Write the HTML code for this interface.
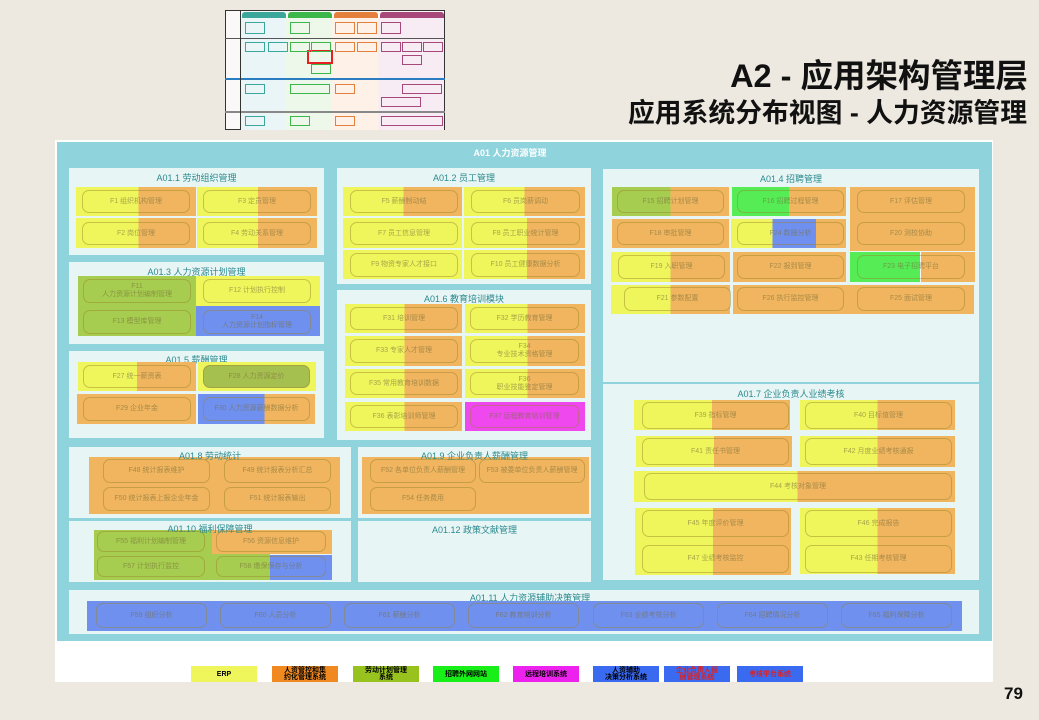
<!DOCTYPE html><html><head><meta charset="utf-8"><style>
*{margin:0;padding:0;box-sizing:border-box}
body{width:1039px;height:720px;background:#ede9e0;position:relative;overflow:hidden;font-family:"Liberation Sans","Noto Sans CJK SC",sans-serif}
.a{position:absolute}
.p{position:absolute;background:#e7f5f4}
.t{position:absolute;font-size:9px;color:#2c8a90;text-align:center;white-space:nowrap}
.c{position:absolute}
.b{position:absolute;border:1px solid rgba(150,130,40,.45);border-radius:7px;font-size:7px;color:rgba(120,110,60,.6);display:flex;align-items:center;justify-content:center;text-align:center;line-height:8px}
.Y{background:#eef65c}.O{background:#f0b55e}.G{background:#a6cd4f}.N{background:#55ec55}.B{background:#6f90ef}.M{background:#ee48ee}
.lg{position:absolute;top:666px;height:16px;width:66px;font-size:7px;font-weight:bold;display:flex;align-items:center;justify-content:center;text-align:center;line-height:7px}
.tb{position:absolute;background:#fff}
</style></head><body>

<!-- thumbnail -->
<div class="a" style="left:225px;top:10px;width:220px;height:120px;background:#fbf8f8;border:1px solid #333"></div>
<div class="a" style="left:242px;top:12px;width:44px;height:6px;background:#3aa79a;border-radius:3px 3px 0 0"></div>
<div class="a" style="left:288px;top:12px;width:44px;height:6px;background:#3cb84a;border-radius:3px 3px 0 0"></div>
<div class="a" style="left:334px;top:12px;width:44px;height:6px;background:#e57f3c;border-radius:3px 3px 0 0"></div>
<div class="a" style="left:380px;top:12px;width:64px;height:6px;background:#a8487a;border-radius:3px 3px 0 0"></div>
<div class="a" style="left:240px;top:18px;width:204px;height:112px;background:linear-gradient(90deg,#e9f5f7 0 22%,#eef8ea 22% 45%,#fdf1e8 45% 68%,#f8ecf4 68%)"></div>
<div class="a" style="left:225px;top:38px;width:220px;height:1px;background:#555"></div>
<div class="a" style="left:225px;top:78px;width:220px;height:2px;background:#2a7dc0"></div>
<div class="a" style="left:225px;top:111px;width:220px;height:2px;background:#888"></div>
<div class="a" style="left:240px;top:10px;width:1px;height:120px;background:#333"></div>
<div class="a" style="left:307px;top:50px;width:26px;height:14px;border:2px solid #e52020"></div>
<div class="a" style="left:245px;top:22px;width:20px;height:12px;border:1px solid #3aa79a"></div>
<div class="a" style="left:245px;top:42px;width:20px;height:10px;border:1px solid #3aa79a"></div>
<div class="a" style="left:268px;top:42px;width:20px;height:10px;border:1px solid #3aa79a"></div>
<div class="a" style="left:290px;top:22px;width:20px;height:12px;border:1px solid #3cb84a"></div>
<div class="a" style="left:290px;top:42px;width:20px;height:10px;border:1px solid #3cb84a"></div>
<div class="a" style="left:311px;top:42px;width:20px;height:10px;border:1px solid #3cb84a"></div>
<div class="a" style="left:311px;top:64px;width:20px;height:10px;border:1px solid #3cb84a"></div>
<div class="a" style="left:335px;top:22px;width:20px;height:12px;border:1px solid #e57f3c"></div>
<div class="a" style="left:357px;top:22px;width:20px;height:12px;border:1px solid #e57f3c"></div>
<div class="a" style="left:335px;top:42px;width:20px;height:10px;border:1px solid #e57f3c"></div>
<div class="a" style="left:357px;top:42px;width:20px;height:10px;border:1px solid #e57f3c"></div>
<div class="a" style="left:381px;top:22px;width:20px;height:12px;border:1px solid #a8487a"></div>
<div class="a" style="left:381px;top:42px;width:20px;height:10px;border:1px solid #a8487a"></div>
<div class="a" style="left:402px;top:42px;width:20px;height:10px;border:1px solid #a8487a"></div>
<div class="a" style="left:423px;top:42px;width:20px;height:10px;border:1px solid #a8487a"></div>
<div class="a" style="left:402px;top:55px;width:20px;height:10px;border:1px solid #a8487a"></div>
<div class="a" style="left:245px;top:84px;width:20px;height:10px;border:1px solid #3aa79a"></div>
<div class="a" style="left:290px;top:84px;width:40px;height:10px;border:1px solid #3cb84a"></div>
<div class="a" style="left:335px;top:84px;width:20px;height:10px;border:1px solid #e57f3c"></div>
<div class="a" style="left:402px;top:84px;width:40px;height:10px;border:1px solid #a8487a"></div>
<div class="a" style="left:381px;top:97px;width:40px;height:10px;border:1px solid #a8487a"></div>
<div class="a" style="left:245px;top:116px;width:20px;height:10px;border:1px solid #3aa79a"></div>
<div class="a" style="left:290px;top:116px;width:20px;height:10px;border:1px solid #3cb84a"></div>
<div class="a" style="left:335px;top:116px;width:20px;height:10px;border:1px solid #e57f3c"></div>
<div class="a" style="left:381px;top:116px;width:62px;height:10px;border:1px solid #a8487a"></div>

<!-- titles -->
<div class="a" style="right:11px;top:50px;font-size:32.5px;font-weight:bold;color:#111;white-space:nowrap">A2 - 应用架构管理层</div>
<div class="a" style="right:12px;top:91px;font-size:26.8px;font-weight:bold;color:#111;white-space:nowrap">应用系统分布视图 - 人力资源管理</div>
<div class="a" style="left:1004px;top:684px;font-size:17px;font-weight:bold;color:#111">79</div>

<!-- white panel -->
<div class="a" style="left:55px;top:140px;width:938px;height:542px;background:#fff"></div>
<div class="a" style="left:57px;top:142px;width:935px;height:499px;background:#8fd4dc"></div>
<div class="t" style="left:440px;top:146px;width:140px;color:#fff;font-weight:bold">A01 人力资源管理</div>

<!-- A01.1 -->
<div class="p" style="left:69px;top:168px;width:255px;height:87px"></div>
<div class="t" style="left:69px;top:171px;width:255px">A01.1 劳动组织管理</div>
<div class="c" style="left:76px;top:187px;width:120px;height:29px;background:linear-gradient(90deg,#eef65c 0 52%,#f0b55e 52%)"></div>
<div class="c" style="left:197px;top:187px;width:120px;height:29px;background:linear-gradient(90deg,#eef65c 0 51%,#f0b55e 51%)"></div>
<div class="c" style="left:76px;top:218px;width:120px;height:30px;background:linear-gradient(90deg,#eef65c 0 52%,#f0b55e 52%)"></div>
<div class="c" style="left:197px;top:218px;width:120px;height:30px;background:linear-gradient(90deg,#eef65c 0 51%,#f0b55e 51%)"></div>
<div class="b" style="left:82px;top:190px;width:108px;height:23px">F1 组织机构管理</div>
<div class="b" style="left:203px;top:190px;width:108px;height:23px">F3 定员管理</div>
<div class="b" style="left:82px;top:222px;width:108px;height:23px">F2 岗位管理</div>
<div class="b" style="left:203px;top:222px;width:108px;height:23px">F4 劳动关系管理</div>

<!-- A01.3 -->
<div class="p" style="left:69px;top:262px;width:255px;height:82px"></div>
<div class="t" style="left:69px;top:265px;width:255px">A01.3 人力资源计划管理</div>
<div class="c G" style="left:78px;top:276px;width:118px;height:60px"></div>
<div class="c Y" style="left:196px;top:276px;width:124px;height:30px"></div>
<div class="c B" style="left:196px;top:306px;width:124px;height:30px"></div>
<div class="b" style="left:83px;top:279px;width:108px;height:24px">F11<br>人力资源计划编制管理</div>
<div class="b" style="left:203px;top:279px;width:108px;height:24px">F12 计划执行控制</div>
<div class="b" style="left:83px;top:310px;width:108px;height:24px">F13 模型库管理</div>
<div class="b" style="left:203px;top:310px;width:108px;height:24px">F14<br>人力资源计划指标管理</div>

<!-- A01.5 -->
<div class="p" style="left:69px;top:351px;width:255px;height:87px"></div>
<div class="t" style="left:69px;top:353px;width:255px">A01.5 薪酬管理</div>
<div class="c" style="left:78px;top:362px;width:118px;height:29px;background:linear-gradient(90deg,#eef65c 0 50%,#f0b55e 50%)"></div>
<div class="c Y" style="left:198px;top:362px;width:118px;height:29px"></div>
<div class="c O" style="left:77px;top:394px;width:119px;height:30px"></div>
<div class="c" style="left:198px;top:394px;width:117px;height:30px;background:linear-gradient(90deg,#6f90ef 0 57%,#f0b55e 57%)"></div>
<div class="b" style="left:83px;top:365px;width:108px;height:23px">F27 统一薪资表</div>
<div class="b" style="left:203px;top:365px;width:107px;height:23px;background:#a6c050">F28 人力资源定价</div>
<div class="b" style="left:83px;top:397px;width:108px;height:24px">F29 企业年金</div>
<div class="b" style="left:203px;top:397px;width:107px;height:24px">F30 人力资源薪酬数据分析</div>

<!-- A01.2 -->
<div class="p" style="left:337px;top:168px;width:254px;height:116px"></div>
<div class="t" style="left:337px;top:171px;width:254px">A01.2 员工管理</div>
<div class="c" style="left:343px;top:187px;width:119px;height:29px;background:linear-gradient(90deg,#eef65c 0 51%,#f0b55e 51%)"></div>
<div class="c" style="left:464px;top:187px;width:121px;height:29px;background:linear-gradient(90deg,#eef65c 0 50%,#f0b55e 50%)"></div>
<div class="c Y" style="left:343px;top:218px;width:119px;height:30px"></div>
<div class="c" style="left:464px;top:218px;width:121px;height:30px;background:linear-gradient(90deg,#eef65c 0 52%,#f0b55e 52%)"></div>
<div class="c Y" style="left:343px;top:250px;width:119px;height:29px"></div>
<div class="c" style="left:464px;top:250px;width:121px;height:29px;background:linear-gradient(90deg,#eef65c 0 52%,#f0b55e 52%)"></div>
<div class="b" style="left:350px;top:190px;width:108px;height:23px">F5 薪酬制动结</div>
<div class="b" style="left:471px;top:190px;width:109px;height:23px">F6 员岗薪调动</div>
<div class="b" style="left:350px;top:222px;width:108px;height:23px">F7 员工信息管理</div>
<div class="b" style="left:471px;top:222px;width:109px;height:23px">F8 员工职业统计管理</div>
<div class="b" style="left:350px;top:253px;width:108px;height:24px">F9 物资专家人才接口</div>
<div class="b" style="left:471px;top:253px;width:109px;height:24px">F10 员工健康数据分析</div>

<!-- A01.6 -->
<div class="p" style="left:337px;top:290px;width:254px;height:150px"></div>
<div class="t" style="left:337px;top:292px;width:254px">A01.6 教育培训模块</div>
<div class="c" style="left:345px;top:304px;width:117px;height:29px;background:linear-gradient(90deg,#eef65c 0 51%,#f0b55e 51%)"></div>
<div class="c" style="left:465px;top:304px;width:120px;height:29px;background:linear-gradient(90deg,#eef65c 0 52%,#f0b55e 52%)"></div>
<div class="c" style="left:345px;top:336px;width:117px;height:30px;background:linear-gradient(90deg,#eef65c 0 51%,#f0b55e 51%)"></div>
<div class="c" style="left:465px;top:336px;width:120px;height:30px;background:linear-gradient(90deg,#eef65c 0 52%,#f0b55e 52%)"></div>
<div class="c" style="left:345px;top:369px;width:117px;height:29px;background:linear-gradient(90deg,#eef65c 0 51%,#f0b55e 51%)"></div>
<div class="c" style="left:465px;top:369px;width:120px;height:29px;background:linear-gradient(90deg,#eef65c 0 52%,#f0b55e 52%)"></div>
<div class="c" style="left:345px;top:402px;width:117px;height:29px;background:linear-gradient(90deg,#eef65c 0 51%,#f0b55e 51%)"></div>
<div class="c M" style="left:465px;top:402px;width:120px;height:29px"></div>
<div class="b" style="left:350px;top:307px;width:108px;height:23px">F31 培训管理</div>
<div class="b" style="left:470px;top:307px;width:109px;height:23px">F32 学历教育管理</div>
<div class="b" style="left:350px;top:339px;width:108px;height:24px">F33 专家人才管理</div>
<div class="b" style="left:470px;top:339px;width:109px;height:24px">F34<br>专业技术资格管理</div>
<div class="b" style="left:350px;top:372px;width:108px;height:23px">F35 常用教育培训数据</div>
<div class="b" style="left:470px;top:372px;width:109px;height:23px">F36<br>职业技能鉴定管理</div>
<div class="b" style="left:350px;top:405px;width:108px;height:23px">F36 表彰培训师管理</div>
<div class="b" style="left:470px;top:405px;width:109px;height:23px">F37 远程教育培训管理</div>

<!-- A01.4 -->
<div class="p" style="left:603px;top:169px;width:376px;height:213px"></div>
<div class="t" style="left:603px;top:172px;width:376px">A01.4 招聘管理</div>
<div class="c" style="left:612px;top:187px;width:117px;height:29px;background:linear-gradient(90deg,#a6cd4f 0 50%,#f0b55e 50%)"></div>
<div class="c" style="left:732px;top:187px;width:114px;height:29px;background:linear-gradient(90deg,#55ec55 0 50%,#f0b55e 50%)"></div>
<div class="c O" style="left:850px;top:187px;width:125px;height:64px"></div>
<div class="c O" style="left:612px;top:219px;width:117px;height:29px"></div>
<div class="c" style="left:731px;top:219px;width:115px;height:29px;background:linear-gradient(90deg,#eef65c 0 36%,#6f90ef 36% 74%,#f0b55e 74%)"></div>
<div class="c" style="left:611px;top:252px;width:119px;height:30px;background:linear-gradient(90deg,#eef65c 0 50%,#f0b55e 50%)"></div>
<div class="c O" style="left:733px;top:252px;width:113px;height:30px"></div>
<div class="c" style="left:850px;top:252px;width:125px;height:30px;background:linear-gradient(90deg,#55ec55 0 56%,#fff 56% 57%,#f0b55e 57%)"></div>
<div class="c" style="left:611px;top:285px;width:119px;height:29px;background:linear-gradient(90deg,#eef65c 0 50%,#f0b55e 50%)"></div>
<div class="c O" style="left:733px;top:285px;width:241px;height:29px"></div>
<div class="b" style="left:617px;top:190px;width:107px;height:23px">F15 招聘计划管理</div>
<div class="b" style="left:737px;top:190px;width:107px;height:23px">F16 招聘过程管理</div>
<div class="b" style="left:857px;top:190px;width:108px;height:23px">F17 评估管理</div>
<div class="b" style="left:617px;top:222px;width:107px;height:23px">F18 审批管理</div>
<div class="b" style="left:737px;top:222px;width:107px;height:23px">F24 数据分析</div>
<div class="b" style="left:857px;top:222px;width:108px;height:23px">F20 测校协助</div>
<div class="b" style="left:618px;top:255px;width:107px;height:24px">F19 入职管理</div>
<div class="b" style="left:737px;top:255px;width:107px;height:24px">F22 报到管理</div>
<div class="b" style="left:857px;top:255px;width:108px;height:24px">F23 电子招聘平台</div>
<div class="b" style="left:624px;top:287px;width:107px;height:24px">F21 参数配置</div>
<div class="b" style="left:737px;top:287px;width:107px;height:24px">F26 执行监控管理</div>
<div class="b" style="left:857px;top:287px;width:108px;height:24px">F25 面试管理</div>

<!-- A01.7 -->
<div class="p" style="left:603px;top:384px;width:376px;height:196px"></div>
<div class="t" style="left:603px;top:387px;width:376px">A01.7 企业负责人业绩考核</div>
<div class="c" style="left:634px;top:400px;width:156px;height:30px;background:linear-gradient(90deg,#eef65c 0 50%,#f0b55e 50%)"></div>
<div class="c" style="left:800px;top:400px;width:155px;height:30px;background:linear-gradient(90deg,#eef65c 0 50%,#f0b55e 50%)"></div>
<div class="c" style="left:636px;top:436px;width:156px;height:31px;background:linear-gradient(90deg,#eef65c 0 50%,#f0b55e 50%)"></div>
<div class="c" style="left:800px;top:436px;width:155px;height:31px;background:linear-gradient(90deg,#eef65c 0 50%,#f0b55e 50%)"></div>
<div class="c" style="left:634px;top:471px;width:321px;height:31px;background:linear-gradient(90deg,#eef65c 0 51%,#f0b55e 51%)"></div>
<div class="c" style="left:635px;top:508px;width:156px;height:67px;background:linear-gradient(90deg,#eef65c 0 50%,#f0b55e 50%)"></div>
<div class="c" style="left:800px;top:508px;width:155px;height:66px;background:linear-gradient(90deg,#eef65c 0 50%,#f0b55e 50%)"></div>
<div class="b" style="left:642px;top:402px;width:147px;height:27px">F39 指标管理</div>
<div class="b" style="left:805px;top:402px;width:147px;height:27px">F40 目标值管理</div>
<div class="b" style="left:642px;top:438px;width:147px;height:27px">F41 责任书管理</div>
<div class="b" style="left:805px;top:438px;width:147px;height:27px">F42 月度业绩考核通报</div>
<div class="b" style="left:644px;top:473px;width:308px;height:27px">F44 考核对象管理</div>
<div class="b" style="left:642px;top:510px;width:147px;height:27px">F45 年度评价管理</div>
<div class="b" style="left:805px;top:510px;width:147px;height:27px">F46 完成报告</div>
<div class="b" style="left:642px;top:545px;width:147px;height:28px">F47 业绩考核监控</div>
<div class="b" style="left:805px;top:545px;width:147px;height:28px">F43 任期考核管理</div>

<!-- A01.8 -->
<div class="p" style="left:69px;top:447px;width:282px;height:71px"></div>
<div class="c O" style="left:89px;top:457px;width:251px;height:57px"></div>
<div class="t" style="left:69px;top:449px;width:282px">A01.8 劳动统计</div>
<div class="b" style="left:103px;top:459px;width:107px;height:24px">F48 统计报表维护</div>
<div class="b" style="left:224px;top:459px;width:107px;height:24px">F49 统计报表分析汇总</div>
<div class="b" style="left:103px;top:487px;width:107px;height:24px">F50 统计报表上报企业年金</div>
<div class="b" style="left:224px;top:487px;width:107px;height:24px">F51 统计报表输出</div>

<!-- A01.9 -->
<div class="p" style="left:358px;top:447px;width:233px;height:71px"></div>
<div class="c O" style="left:362px;top:457px;width:227px;height:57px"></div>
<div class="t" style="left:358px;top:449px;width:233px">A01.9 企业负责人薪酬管理</div>
<div class="b" style="left:370px;top:459px;width:106px;height:24px">F52 各单位负责人薪酬管理</div>
<div class="b" style="left:479px;top:459px;width:106px;height:24px">F53 被委单位负责人薪酬管理</div>
<div class="b" style="left:370px;top:487px;width:106px;height:24px">F54 任务费用</div>

<!-- A01.10 -->
<div class="p" style="left:69px;top:521px;width:282px;height:61px"></div>
<div class="c G" style="left:94px;top:530px;width:176px;height:50px"></div>
<div class="c O" style="left:212px;top:530px;width:120px;height:24px"></div>
<div class="c B" style="left:270px;top:555px;width:62px;height:25px"></div>
<div class="t" style="left:69px;top:522px;width:282px">A01.10 福利保障管理</div>
<div class="b" style="left:97px;top:531px;width:108px;height:21px">F55 福利计划编制管理</div>
<div class="b" style="left:216px;top:531px;width:110px;height:21px">F56 资源信息维护</div>
<div class="b" style="left:97px;top:556px;width:108px;height:21px">F57 计划执行监控</div>
<div class="b" style="left:216px;top:556px;width:110px;height:21px">F58 缴保保存与分析</div>

<!-- A01.12 -->
<div class="p" style="left:358px;top:521px;width:233px;height:61px"></div>
<div class="t" style="left:358px;top:523px;width:233px">A01.12 政策文献管理</div>

<!-- A01.11 -->
<div class="p" style="left:69px;top:590px;width:910px;height:44px"></div>
<div class="t" style="left:440px;top:591px;width:180px">A01.11 人力资源辅助决策管理</div>
<div class="c B" style="left:87px;top:601px;width:875px;height:30px"></div>
<div class="b" style="left:96px;top:603px;width:111px;height:25px">F59 组织分析</div>
<div class="b" style="left:220px;top:603px;width:111px;height:25px">F60 人员分析</div>
<div class="b" style="left:344px;top:603px;width:111px;height:25px">F61 薪酬分析</div>
<div class="b" style="left:468px;top:603px;width:111px;height:25px">F62 教育培训分析</div>
<div class="b" style="left:593px;top:603px;width:111px;height:25px">F63 业绩考核分析</div>
<div class="b" style="left:717px;top:603px;width:111px;height:25px">F64 招聘情况分析</div>
<div class="b" style="left:841px;top:603px;width:111px;height:25px">F65 福利保障分析</div>

<!-- legend -->
<div class="lg Y" style="left:191px">ERP</div>
<div class="lg" style="left:272px;background:#f08a20">人资管控和集<br>约化管理系统</div>
<div class="lg" style="left:353px;background:#98c21d">劳动计划管理<br>系统</div>
<div class="lg" style="left:433px;background:#18ee18">招聘外网网站</div>
<div class="lg" style="left:513px;background:#ee22ee">远程培训系统</div>
<div class="lg" style="left:593px;background:#3a6af0">人资辅助<br>决策分析系统</div>
<div class="lg" style="left:664px;background:#3a6af0;color:#e02020">企业负责人薪<br>酬管理系统</div>
<div class="lg" style="left:737px;background:#3a6af0;color:#e02020">考核平台系统</div>
</body></html>
